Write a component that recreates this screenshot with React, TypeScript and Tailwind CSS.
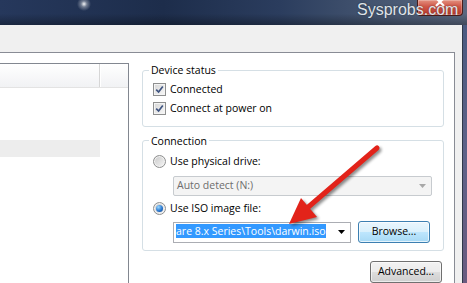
import React from "react";

function CheckBox() {
  return (
    <span className="flex h-[13px] w-[13px] shrink-0 items-center justify-center border border-[#8e8f8f] bg-[linear-gradient(135deg,#d6d6d6,#f8f8f8)] shadow-[inset_0_0_0_1px_#f4f4f4]">
      <svg width="9" height="9" viewBox="0 0 9 9">
        <path d="M1.2 4.6 L3.6 7 L7.8 1.6" fill="none" stroke="#3f5480" strokeWidth="1.7" />
      </svg>
    </span>
  );
}

function Radio({ checked }: { checked?: boolean }) {
  return (
    <span className="flex h-[13px] w-[13px] shrink-0 items-center justify-center rounded-full border border-[#8e8f8f] bg-[linear-gradient(135deg,#c9c9c9,#f6f6f6)] shadow-[inset_0_0_0_1px_#f2f2f2]">
      {checked && (
        <span className="h-[7px] w-[7px] rounded-full bg-[radial-gradient(circle_at_35%_30%,#9ad8ff,#2a78d0_55%,#0d3f86)]" />
      )}
    </span>
  );
}

function Row({ children, className = "" }: { children: React.ReactNode; className?: string }) {
  return <div className={`flex items-center gap-[4px] ${className}`}>{children}</div>;
}

function DropArrow({ color }: { color: string }) {
  return (
    <svg width="7" height="4" viewBox="0 0 7 4">
      <path d="M0 0 H7 L3.5 4 Z" fill={color} />
    </svg>
  );
}

export default function App() {
  return (
    <div className="relative h-[283px] w-[467px] overflow-hidden bg-[#1f2f4e] font-['Open_Sans','Noto_Sans',sans-serif] text-[10.5px] text-black">
      {/* title bar */}
      <div className="flex h-[25px] justify-end pr-[4px] bg-[image:radial-gradient(circle_at_84px_4px,rgba(255,255,255,0.95)_0px,rgba(255,255,255,0.35)_3px,transparent_7px),linear-gradient(180deg,rgba(0,0,0,0)_55%,rgba(0,0,0,0.3)_100%),linear-gradient(90deg,#26385c_0%,#1d2d4b_35%,#2b3d5e_60%,#4a5a74_85%,#5c6880_100%)]">
        <div className="flex h-[16px] w-[46px] justify-center rounded-b-[4px] border border-t-0 border-[#4a1d1a] bg-[linear-gradient(180deg,#e3907f_0%,#cf5546_45%,#b9392d_100%)] shadow-[inset_0_0_0_1px_rgba(255,255,255,0.25)]">
          <svg className="-mt-[3px]" width="10" height="10" viewBox="0 0 10 10">
            <path d="M1 1 L9 9 M9 1 L1 9" stroke="white" strokeWidth="2.2" />
          </svg>
        </div>
      </div>
      <span className="absolute left-[357px] top-0 font-['Liberation_Sans',Arial,sans-serif] text-[16px] leading-[20px] text-[#dfe3e8] [text-shadow:0_0_2px_rgba(0,0,0,0.45)]">
        Sysprobs.com
      </span>

      <div className="flex h-[258px]">
        <div className="w-[462px] bg-[#f0f0f0] pt-[27px]">
          <div className="flex h-[231px] w-[455px] border-t border-r border-[#898c95] bg-white">
            {/* hardware list */}
            <div className="mt-[10px] w-[129px] shrink-0 border-t border-r border-[#828790]">
              <div className="flex h-[24px] border-b border-[#e3e3e3] bg-[linear-gradient(180deg,#ffffff,#f1f2f4)]">
                <div className="w-[100px] border-r border-[#d6d6d6]" />
                <div className="flex-1 border-l border-white" />
              </div>
              <div className="mt-[52px] h-[17px] w-[100px] bg-[#ededed]" />
            </div>

            {/* device settings */}
            <div className="flex flex-1 flex-col pl-[13px] pr-[10px] pt-[10px]">
              <fieldset className="h-[66px] rounded-[3px] border border-[#d5dfe5] p-0">
                <legend className="ml-[6px] px-[2px] leading-[14px]">Device status</legend>
                <div className="pl-[10px] pt-[3px]">
                  <Row className="h-[19px]">
                    <CheckBox />
                    <span>Connected</span>
                  </Row>
                  <Row className="h-[19px]">
                    <CheckBox />
                    <span>Connect at power on</span>
                  </Row>
                </div>
              </fieldset>

              <fieldset className="mt-[7px] h-[121px] rounded-[3px] border border-[#d5dfe5] p-0">
                <legend className="ml-[6px] px-[2px] leading-[14px]">Connection</legend>
                <div className="pl-[10px] pt-[5px]">
                  <Row className="h-[18px]">
                    <Radio />
                    <span>Use physical drive:</span>
                  </Row>
                  <div className="ml-[20px] mt-[5px] flex h-[20px] w-[259px] items-center rounded-[2px] border border-[#c7cbcf] bg-[#f4f4f4] pl-[3px] pr-[5px] text-[#6d6d6d]">
                    <span className="flex-1">Auto detect (N:)</span>
                    <DropArrow color="#a8a8a8" />
                  </div>
                  <Row className="mt-[4px] h-[18px]">
                    <Radio checked />
                    <span>Use ISO image file:</span>
                  </Row>
                  <div className="ml-[20px] mt-[3px] flex h-[22px] items-start">
                    <div className="mt-[1px] flex h-[21px] w-[178px] items-center border border-[#abadb3] bg-white pl-[2px] pr-[5px]">
                      <span className="flex-1 overflow-hidden whitespace-nowrap">
                        <span className="bg-[#3399ff] text-white">{"are 8.x Series\\Tools\\darwin.iso"}</span>
                      </span>
                      <DropArrow color="#000000" />
                    </div>
                    <div className="ml-[7px] flex h-[22px] w-[72px] items-center justify-center rounded-[3px] border border-[#3c7fb1] bg-[linear-gradient(180deg,#eaf6fd_0%,#d9f0fc_50%,#bee6fd_50%,#a7d9f5_100%)] shadow-[inset_0_0_0_1px_rgba(255,255,255,0.7)]">
                      Browse...
                    </div>
                  </div>
                </div>
              </fieldset>

              <div className="mr-[2px] mt-[10px] flex h-[23px] w-[72px] items-center justify-center self-end rounded-[3px] border border-[#707070] bg-[linear-gradient(180deg,#f2f2f2_0%,#ebebeb_50%,#dddddd_50%,#cfcfcf_100%)] shadow-[inset_0_0_0_1px_rgba(255,255,255,0.6)]">
                Advanced...
              </div>
            </div>
          </div>
        </div>
        <div className="w-px bg-[#2f3848]" />
        <div className="flex-1 bg-[linear-gradient(180deg,#4b5a80,#5e6288,#6a5b80)]" />
      </div>

      {/* red pointer arrow */}
      <svg className="pointer-events-none absolute left-0 top-0" width="467" height="283" viewBox="0 0 467 283">
        <defs>
          <filter id="sh" x="-20%" y="-20%" width="140%" height="140%">
            <feGaussianBlur stdDeviation="1.5" />
          </filter>
        </defs>
        <g filter="url(#sh)" opacity="0.45" transform="translate(2 2)">
          <path d="M377 148 L306 209" stroke="#000" strokeWidth="5" strokeLinecap="round" />
          <path d="M289 224 L301 198 L317 217 Z" fill="#000" />
        </g>
        <path d="M377 148 L306 209" stroke="#e2231a" strokeWidth="5" strokeLinecap="round" />
        <path d="M289 224 L301 198 L317 217 Z" fill="#e2231a" />
      </svg>
    </div>
  );
}
